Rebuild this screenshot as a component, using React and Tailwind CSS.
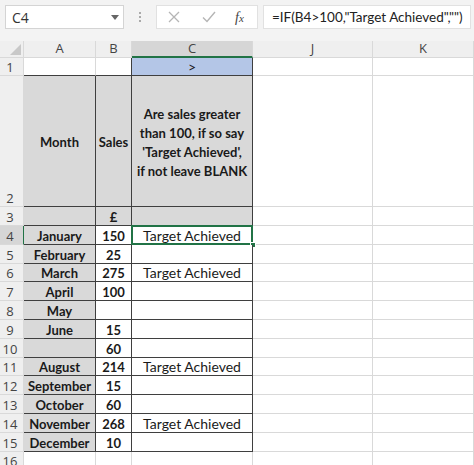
import React from "react";

const DARK = "border-[#3f3f3f]";
const LIGHT = "border-[#d9d9d9]";

const rows = [
  { n: 4, month: "January", sales: "150", result: "Target Achieved" },
  { n: 5, month: "February", sales: "25", result: "" },
  { n: 6, month: "March", sales: "275", result: "Target Achieved" },
  { n: 7, month: "April", sales: "100", result: "" },
  { n: 8, month: "May", sales: "", result: "" },
  { n: 9, month: "June", sales: "15", result: "" },
  { n: 10, month: "", sales: "60", result: "" },
  { n: 11, month: "August", sales: "214", result: "Target Achieved" },
  { n: 12, month: "September", sales: "15", result: "" },
  { n: 13, month: "October", sales: "60", result: "" },
  { n: 14, month: "November", sales: "268", result: "Target Achieved" },
  { n: 15, month: "December", sales: "10", result: "" },
];

function RowHead({ n, selected, className = "" }) {
  return (
    <div
      className={`flex items-end justify-center pr-[3px] border-b border-r ${LIGHT} text-[13px] leading-[16px] text-[#444] ${
        selected ? "bg-[#d6d6d6] border-r-[#217346]" : "bg-[#efefef]"
      } ${className}`}
      style={{ fontFamily: "'Open Sans', sans-serif" }}
    >
      {n}
    </div>
  );
}

function Blank() {
  return (
    <>
      <div className={`bg-white border-r border-b ${LIGHT}`} />
      <div className={`bg-white border-r border-b ${LIGHT}`} />
    </>
  );
}

export default function App() {
  const cell = "flex items-end justify-center leading-[16px] text-[#1a1a1a]";
  const center = "flex items-center justify-center leading-none text-[#1a1a1a] pt-[3px]";
  return (
    <div className="w-[474px] h-[465px] overflow-hidden bg-white" style={{ fontFamily: "Lato, sans-serif" }}>
      {/* formula bar */}
      <div className="h-[41px] bg-[#f3f3f3] flex items-start pt-[5px] pl-[5px] gap-0">
        <div className="w-[119px] h-[24px] bg-white border border-[#d4d4d4] flex items-center justify-between pl-[6px] pr-[4px]">
          <span className="text-[14px] text-[#333]" style={{ fontFamily: "'Open Sans', sans-serif" }}>C4</span>
          <svg width="8" height="5" viewBox="0 0 8 5"><path d="M0 0h8L4 5z" fill="#666" /></svg>
        </div>
        <div className="w-[32px] h-[24px] flex flex-col items-center justify-center gap-[2px]">
          <span className="w-[2px] h-[2px] bg-[#aaa]" />
          <span className="w-[2px] h-[2px] bg-[#aaa]" />
          <span className="w-[2px] h-[2px] bg-[#aaa]" />
        </div>
        <div className="w-[102px] h-[24px] bg-white border border-[#e1e1e1] flex items-center pl-[11px]">
          <svg width="12" height="12" viewBox="0 0 12 12" className="mr-[22px]">
            <path d="M1 1L11 11M11 1L1 11" stroke="#b5b5b5" strokeWidth="1.3" />
          </svg>
          <svg width="14" height="12" viewBox="0 0 14 12" className="mr-[19px]">
            <path d="M1 6.5L5 10.5L13 1" stroke="#b5b5b5" strokeWidth="1.4" fill="none" />
          </svg>
          <span className="text-[14px] italic text-[#444]" style={{ fontFamily: "'Liberation Serif', serif" }}>
            f<span className="text-[11px]">x</span>
          </span>
        </div>
        <div className="ml-[5px] w-[208px] h-[24px] bg-white border border-[#e1e1e1] flex items-center pl-[8px]">
          <span className="text-[13.5px] text-[#222] whitespace-nowrap" style={{ fontFamily: "Lato, sans-serif" }}>
            =IF(B4&gt;100,"Target Achieved","")
          </span>
        </div>
      </div>

      <div className="grid grid-cols-[24px_72px_36px_121px_120px_101px]">
        {/* column headers */}
        <div className={`h-[17px] bg-[#efefef] border-r border-b ${LIGHT} relative`}>
          <svg width="11" height="11" viewBox="0 0 11 11" className="absolute right-[2px] bottom-[2px]">
            <path d="M11 0V11H0z" fill="#c8c8c8" />
          </svg>
        </div>
        {["A", "B", "C", "J", "K"].map((c) => (
          <div
            key={c}
            className={`h-[17px] flex items-center justify-center text-[13px] text-[#444] border-r ${LIGHT} ${
              c === "C" ? "bg-[#d6d6d6] border-b-2 border-b-[#217346]" : "bg-[#efefef] border-b border-b-[#d9d9d9]"
            }`}
            style={{ fontFamily: "'Open Sans', sans-serif" }}
          >
            {c}
          </div>
        ))}

        {/* row 1 */}
        <RowHead n={1} className="h-[18px]" />
        <div className={`bg-white border-r ${LIGHT} border-b border-b-[#3f3f3f]`} />
        <div className={`bg-white border-r border-b ${DARK}`} />
        <div className={`bg-[#b4c6e7] border-r border-b ${DARK} ${cell} text-[14px]`}>&gt;</div>
        <Blank />

        {/* row 2 */}
        <RowHead n={2} className="h-[131px]" />
        <div className={`bg-[#d9d9d9] border-r border-b ${DARK} ${center} font-bold text-[13px]`}>Month</div>
        <div className={`bg-[#d9d9d9] border-r border-b ${DARK} ${center} font-bold text-[13px]`}>Sales</div>
        <div className={`bg-[#d9d9d9] border-r border-b ${DARK} flex items-center justify-center pt-[3px] text-center font-bold text-[13px] leading-[19px] text-[#1a1a1a] whitespace-nowrap`}>
          <p>
            Are sales greater
            <br />
            than 100, if so say
            <br />
            'Target Achieved',
            <br />
            if not leave BLANK
          </p>
        </div>
        <Blank />

        {/* row 3 */}
        <RowHead n={3} className="h-[19px]" />
        <div className={`bg-[#d9d9d9] border-r border-b ${DARK}`} />
        <div className={`bg-[#d9d9d9] border-r border-b ${DARK} ${cell} font-bold text-[13px]`}>£</div>
        <div className={`bg-[#d9d9d9] border-r border-b ${DARK}`} />
        <Blank />

        {rows.map((r) => (
          <React.Fragment key={r.n}>
            <RowHead n={r.n} selected={r.n === 4} className="h-[18.8px]" />
            <div className={`bg-[#d9d9d9] border-r border-b ${DARK} ${cell} font-bold text-[13px]`}>{r.month}</div>
            <div className={`bg-white border-r border-b ${DARK} ${cell} font-bold text-[13px]`}>{r.sales}</div>
            <div className={`bg-white border-r border-b ${DARK} ${cell} text-[14px] relative`}>
              {r.n === 4 && (
                <>
                  <div className="absolute inset-[-1px] border-2 border-[#217346]" />
                  <div className="absolute right-[-4px] bottom-[-4px] w-[6px] h-[6px] bg-[#217346] border border-white" />
                </>
              )}
              <span className="relative">{r.result}</span>
            </div>
            <Blank />
          </React.Fragment>
        ))}

        {/* row 16 */}
        <RowHead n={16} className="h-[18.8px]" />
        <div className={`bg-white border-r border-b ${LIGHT}`} />
        <div className={`bg-white border-r border-b ${LIGHT}`} />
        <div className={`bg-white border-r border-b ${LIGHT}`} />
        <Blank />
      </div>
    </div>
  );
}
